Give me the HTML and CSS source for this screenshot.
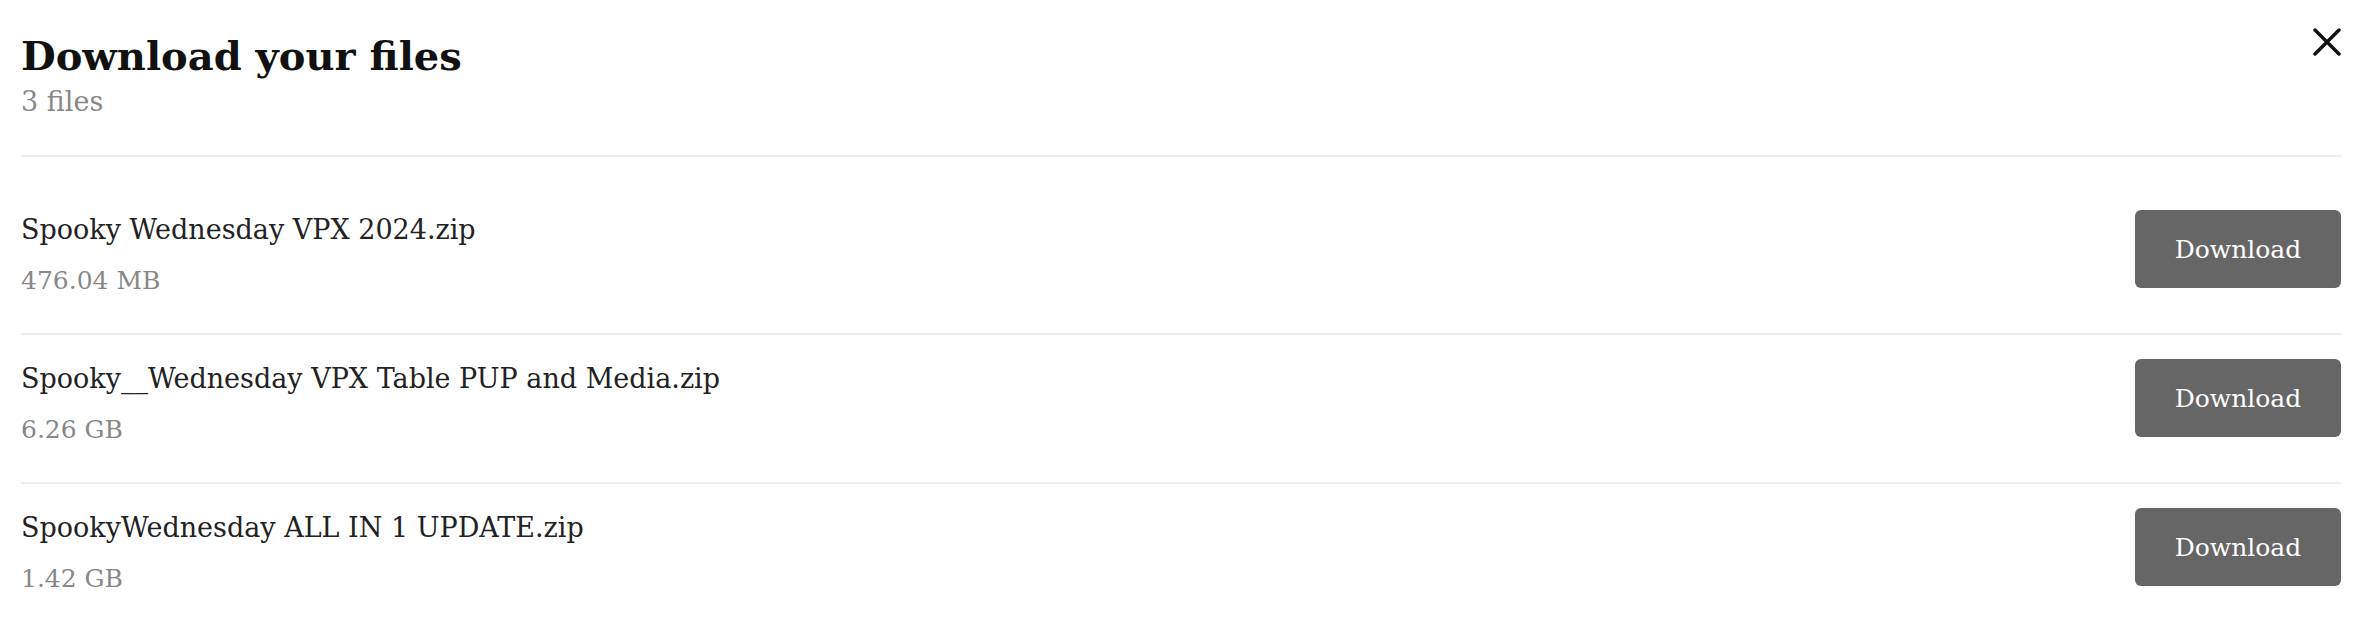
FILE: index.html
```html
<!doctype html>
<html lang="en">
<head>
    <meta charset="UTF-8">
    <meta name="viewport" content="width=device-width, initial-scale=1.0">
    <title>Download your files</title>
    <link rel="stylesheet" href="styles.css">
</head>
<body>
    <div class="modal">
        <div class="modal-header">
            <div>
                <h1>Download your files</h1>
                <div class="file-count">3 files</div>
            </div>
            <button class="close-btn" aria-label="Close">
                <svg width="28" height="28" viewBox="0 0 28 28">
                    <path d="M2 2 L26 26 M26 2 L2 26" stroke="#111" stroke-width="3.4" stroke-linecap="round"/>
                </svg>
            </button>
        </div>

        <ul class="file-list">
            <li class="file-row">
                <div class="file-info">
                    <div class="file-name">Spooky Wednesday VPX 2024.zip</div>
                    <div class="file-size">476.04 MB</div>
                </div>
                <button class="download-btn">Download</button>
            </li>
            <li class="file-row">
                <div class="file-info">
                    <div class="file-name">Spooky__Wednesday VPX Table PUP and Media.zip</div>
                    <div class="file-size">6.26 GB</div>
                </div>
                <button class="download-btn">Download</button>
            </li>
            <li class="file-row">
                <div class="file-info">
                    <div class="file-name">SpookyWednesday ALL IN 1 UPDATE.zip</div>
                    <div class="file-size">1.42 GB</div>
                </div>
                <button class="download-btn">Download</button>
            </li>
        </ul>
    </div>
</body>
</html>
```

FILE: styles.css
```css
body {
    margin: 0;
    background-color: white;
    font-family: "DejaVu Serif", serif;
    color: #222;
}

.modal {
    padding: 28px 18px 0 21px;
}

.modal-header {
    display: flex;
    justify-content: space-between;
    align-items: flex-start;
    padding-bottom: 35px;
    border-bottom: 2px solid #eee;
}

h1 {
    margin: 0;
    font-size: 40px;
    line-height: 56px;
    font-weight: bold;
    color: #111;
}

.file-count {
    font-size: 27px;
    line-height: 36px;
    color: #888;
}

.close-btn {
    background: none;
    border: none;
    padding: 0;
    cursor: pointer;
}

.close-btn svg {
    display: block;
}

.file-list {
    list-style: none;
    margin: 0;
    padding: 29px 0 0 0;
}

.file-row {
    display: flex;
    justify-content: space-between;
    align-items: flex-start;
    padding: 24px 0 34px 0;
    border-bottom: 2px solid #eee;
}

.file-row:last-child {
    border-bottom: none;
}

.file-name {
    font-size: 27px;
    line-height: 40px;
    color: #222;
}

.file-size {
    margin-top: 13px;
    font-size: 25px;
    line-height: 36px;
    color: #888;
}

.download-btn {
    width: 206px;
    height: 78px;
    background-color: #666;
    color: white;
    border: none;
    border-radius: 6px;
    font-family: "DejaVu Serif", serif;
    font-size: 25px;
    cursor: pointer;
}
```
